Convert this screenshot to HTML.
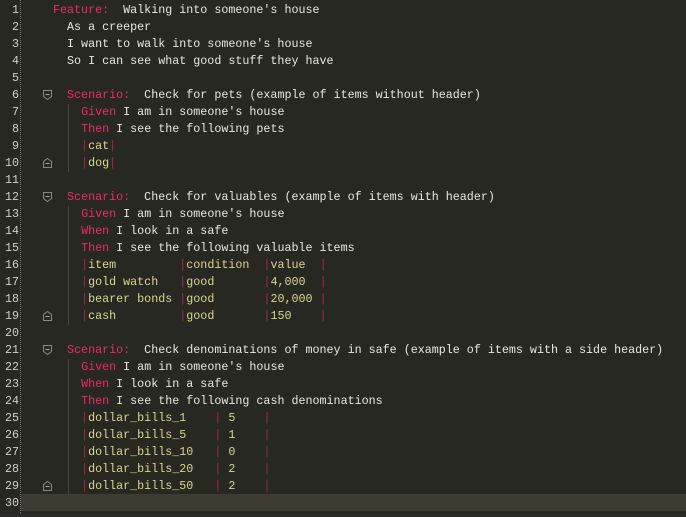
<!DOCTYPE html>
<html><head><style>
body{margin:0;width:686px;height:517px;background:#272822;overflow:hidden;position:relative;font-family:"Liberation Mono",monospace;font-size:11.7px;}
.gut{position:absolute;left:0;top:0;width:20px;height:517px;background:#272822;border-right:1px dotted #777;}
.ln{position:absolute;left:0;width:19px;text-align:right;color:#d0d0c8;height:17px;line-height:17px;}
.l{position:absolute;left:53px;height:17px;line-height:17px;white-space:pre;color:#e8e8dc;}
.k{color:#ef2a6a}.c{color:#d9d68f}.p{color:#a8283f}
.fold{position:absolute;left:43px;width:9px;height:10px;}
.guide{position:absolute;left:68px;width:0;border-left:1px solid #444;}
.cur{position:absolute;left:21px;top:494px;width:665px;height:17px;background:#3c3c32;}
.bot{position:absolute;left:0;bottom:0;width:686px;height:4px;background:#2a2a26;}
</style></head><body>
<div class="cur"></div>
<div class="gut"></div>
<div class="guide" style="top:104px;height:68px"></div>
<div class="guide" style="top:206px;height:119px"></div>
<div class="guide" style="top:359px;height:136px"></div>
<svg class="fold" style="top:90px" viewBox="0 0 9 10"><path d="M0.5 0.5H8.5V6.5L4.5 9.5L0.5 6.5Z" fill="none" stroke="#888"/><path d="M2.5 4.5H6.5" stroke="#aaa"/></svg>
<svg class="fold" style="top:158px" viewBox="0 0 9 10"><path d="M0.5 9.5H8.5V3.5L4.5 0.5L0.5 3.5Z" fill="none" stroke="#888"/><path d="M2.5 5.5H6.5" stroke="#aaa"/></svg>
<svg class="fold" style="top:192px" viewBox="0 0 9 10"><path d="M0.5 0.5H8.5V6.5L4.5 9.5L0.5 6.5Z" fill="none" stroke="#888"/><path d="M2.5 4.5H6.5" stroke="#aaa"/></svg>
<svg class="fold" style="top:311px" viewBox="0 0 9 10"><path d="M0.5 9.5H8.5V3.5L4.5 0.5L0.5 3.5Z" fill="none" stroke="#888"/><path d="M2.5 5.5H6.5" stroke="#aaa"/></svg>
<svg class="fold" style="top:345px" viewBox="0 0 9 10"><path d="M0.5 0.5H8.5V6.5L4.5 9.5L0.5 6.5Z" fill="none" stroke="#888"/><path d="M2.5 4.5H6.5" stroke="#aaa"/></svg>
<svg class="fold" style="top:481px" viewBox="0 0 9 10"><path d="M0.5 9.5H8.5V3.5L4.5 0.5L0.5 3.5Z" fill="none" stroke="#888"/><path d="M2.5 5.5H6.5" stroke="#aaa"/></svg>
<div class="ln" style="top:2px">1</div><div class="ln" style="top:19px">2</div><div class="ln" style="top:36px">3</div><div class="ln" style="top:53px">4</div><div class="ln" style="top:70px">5</div><div class="ln" style="top:87px">6</div><div class="ln" style="top:104px">7</div><div class="ln" style="top:121px">8</div><div class="ln" style="top:138px">9</div><div class="ln" style="top:155px">10</div><div class="ln" style="top:172px">11</div><div class="ln" style="top:189px">12</div><div class="ln" style="top:206px">13</div><div class="ln" style="top:223px">14</div><div class="ln" style="top:240px">15</div><div class="ln" style="top:257px">16</div><div class="ln" style="top:274px">17</div><div class="ln" style="top:291px">18</div><div class="ln" style="top:308px">19</div><div class="ln" style="top:325px">20</div><div class="ln" style="top:342px">21</div><div class="ln" style="top:359px">22</div><div class="ln" style="top:376px">23</div><div class="ln" style="top:393px">24</div><div class="ln" style="top:410px">25</div><div class="ln" style="top:427px">26</div><div class="ln" style="top:444px">27</div><div class="ln" style="top:461px">28</div><div class="ln" style="top:478px">29</div><div class="ln" style="top:495px">30</div>
<div class="l" style="top:2px"><span class="k">Feature:</span>  Walking into someone's house</div>
<div class="l" style="top:19px">  As a creeper</div>
<div class="l" style="top:36px">  I want to walk into someone's house</div>
<div class="l" style="top:53px">  So I can see what good stuff they have</div>
<div class="l" style="top:87px">  <span class="k">Scenario:</span>  Check for pets (example of items without header)</div>
<div class="l" style="top:104px">    <span class="k">Given</span> I am in someone's house</div>
<div class="l" style="top:121px">    <span class="k">Then</span> I see the following pets</div>
<div class="l" style="top:138px">    <span class="p">|</span><span class="c">cat</span><span class="p">|</span></div>
<div class="l" style="top:155px">    <span class="p">|</span><span class="c">dog</span><span class="p">|</span></div>
<div class="l" style="top:189px">  <span class="k">Scenario:</span>  Check for valuables (example of items with header)</div>
<div class="l" style="top:206px">    <span class="k">Given</span> I am in someone's house</div>
<div class="l" style="top:223px">    <span class="k">When</span> I look in a safe</div>
<div class="l" style="top:240px">    <span class="k">Then</span> I see the following valuable items</div>
<div class="l" style="top:257px">    <span class="p">|</span><span class="c">item         </span><span class="p">|</span><span class="c">condition  </span><span class="p">|</span><span class="c">value  </span><span class="p">|</span></div>
<div class="l" style="top:274px">    <span class="p">|</span><span class="c">gold watch   </span><span class="p">|</span><span class="c">good       </span><span class="p">|</span><span class="c">4,000  </span><span class="p">|</span></div>
<div class="l" style="top:291px">    <span class="p">|</span><span class="c">bearer bonds </span><span class="p">|</span><span class="c">good       </span><span class="p">|</span><span class="c">20,000 </span><span class="p">|</span></div>
<div class="l" style="top:308px">    <span class="p">|</span><span class="c">cash         </span><span class="p">|</span><span class="c">good       </span><span class="p">|</span><span class="c">150    </span><span class="p">|</span></div>
<div class="l" style="top:342px">  <span class="k">Scenario:</span>  Check denominations of money in safe (example of items with a side header)</div>
<div class="l" style="top:359px">    <span class="k">Given</span> I am in someone's house</div>
<div class="l" style="top:376px">    <span class="k">When</span> I look in a safe</div>
<div class="l" style="top:393px">    <span class="k">Then</span> I see the following cash denominations</div>
<div class="l" style="top:410px">    <span class="p">|</span><span class="c">dollar_bills_1    </span><span class="p">|</span><span class="c"> 5    </span><span class="p">|</span></div>
<div class="l" style="top:427px">    <span class="p">|</span><span class="c">dollar_bills_5    </span><span class="p">|</span><span class="c"> 1    </span><span class="p">|</span></div>
<div class="l" style="top:444px">    <span class="p">|</span><span class="c">dollar_bills_10   </span><span class="p">|</span><span class="c"> 0    </span><span class="p">|</span></div>
<div class="l" style="top:461px">    <span class="p">|</span><span class="c">dollar_bills_20   </span><span class="p">|</span><span class="c"> 2    </span><span class="p">|</span></div>
<div class="l" style="top:478px">    <span class="p">|</span><span class="c">dollar_bills_50   </span><span class="p">|</span><span class="c"> 2    </span><span class="p">|</span></div>
<div class="bot"></div>
</body></html>
